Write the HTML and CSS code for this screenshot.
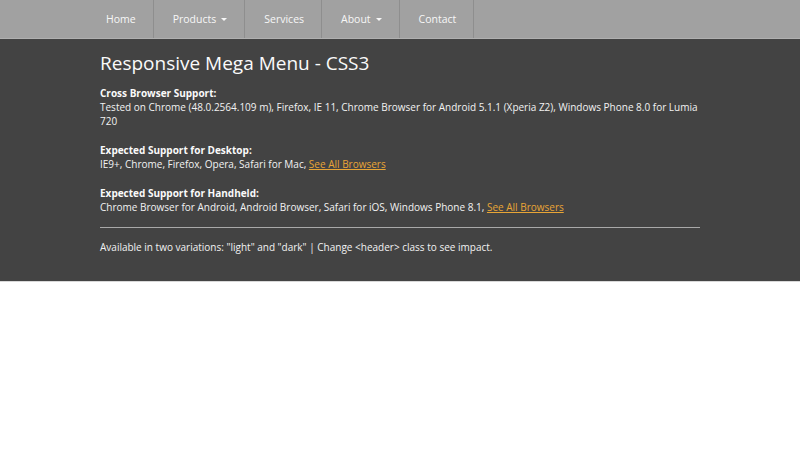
FILE: index.html
```html
<!DOCTYPE html>
<html lang="en">
<head>
    <meta charset="UTF-8">
    <meta name="viewport" content="width=device-width, initial-scale=1.0">
    <title>Responsive Mega Menu - CSS3</title>
    <link rel="stylesheet" href="styles.css">
</head>
<body>
    <header class="dark">
        <nav class="menu-bar">
            <ul class="menu">
                <li><a href="#">Home</a></li>
                <li><a href="#">Products <span class="caret"></span></a></li>
                <li><a href="#">Services</a></li>
                <li><a href="#">About <span class="caret"></span></a></li>
                <li><a href="#">Contact</a></li>
            </ul>
        </nav>
        <div class="content">
            <h1>Responsive Mega Menu - CSS3</h1>
            <p>
                <strong>Cross Browser Support:</strong><br>
                Tested on Chrome (48.0.2564.109 m), Firefox, IE 11, Chrome Browser for Android 5.1.1 (Xperia Z2), Windows Phone 8.0 for Lumia 720
            </p>
            <p>
                <strong>Expected Support for Desktop:</strong><br>
                IE9+, Chrome, Firefox, Opera, Safari for Mac, <a href="#">See All Browsers</a>
            </p>
            <p class="last">
                <strong>Expected Support for Handheld:</strong><br>
                Chrome Browser for Android, Android Browser, Safari for iOS, Windows Phone 8.1, <a href="#">See All Browsers</a>
            </p>
            <hr>
            <p class="note">Available in two variations: "light" and "dark" | Change &lt;header&gt; class to see impact.</p>
        </div>
    </header>
</body>
</html>
```

FILE: styles.css
```css
body {
    font-family: "Open Sans", Arial, sans-serif;
    margin: 0;
    background-color: white;
    font-size: 10.5px;
    line-height: 14px;
}
header.dark {
    background-color: #434343;
    color: #f2f2f2;
    border-bottom: 1px solid #d8d8d8;
    padding-bottom: 27px;
}
.menu-bar {
    background-color: #a1a1a1;
    border-bottom: 1px solid #b0b0b0;
}
.menu {
    list-style: none;
    margin: 0 auto;
    padding: 0 0 0 7px;
    width: 633px;
    display: flex;
}
.menu li {
    border-right: 1px solid #8e8e8e;
}
.menu a {
    display: flex;
    align-items: center;
    gap: 5px;
    height: 38px;
    padding: 0 17px 0 19px;
    color: #f7f7f7;
    text-decoration: none;
}
.caret {
    width: 0;
    height: 0;
    border-left: 3px solid transparent;
    border-right: 3px solid transparent;
    border-top: 3px solid #f7f7f7;
    margin-top: 1px;
}
.content {
    width: 600px;
    margin: 0 auto;
    padding-top: 12px;
}
h1 {
    font-size: 19px;
    font-weight: normal;
    line-height: 25px;
    margin: 0 0 10px;
    color: #fafafa;
}
.content p {
    font-size: 10px;
    margin: 0 0 15px;
}
.content .last {
    margin-bottom: 13px;
}
strong {
    color: #fafafa;
}
.content a {
    color: #e8a536;
}
hr {
    border: none;
    border-top: 1px solid #a9a9a9;
    margin: 0 0 12px;
}
.content .note {
    margin: 0;
}
```
